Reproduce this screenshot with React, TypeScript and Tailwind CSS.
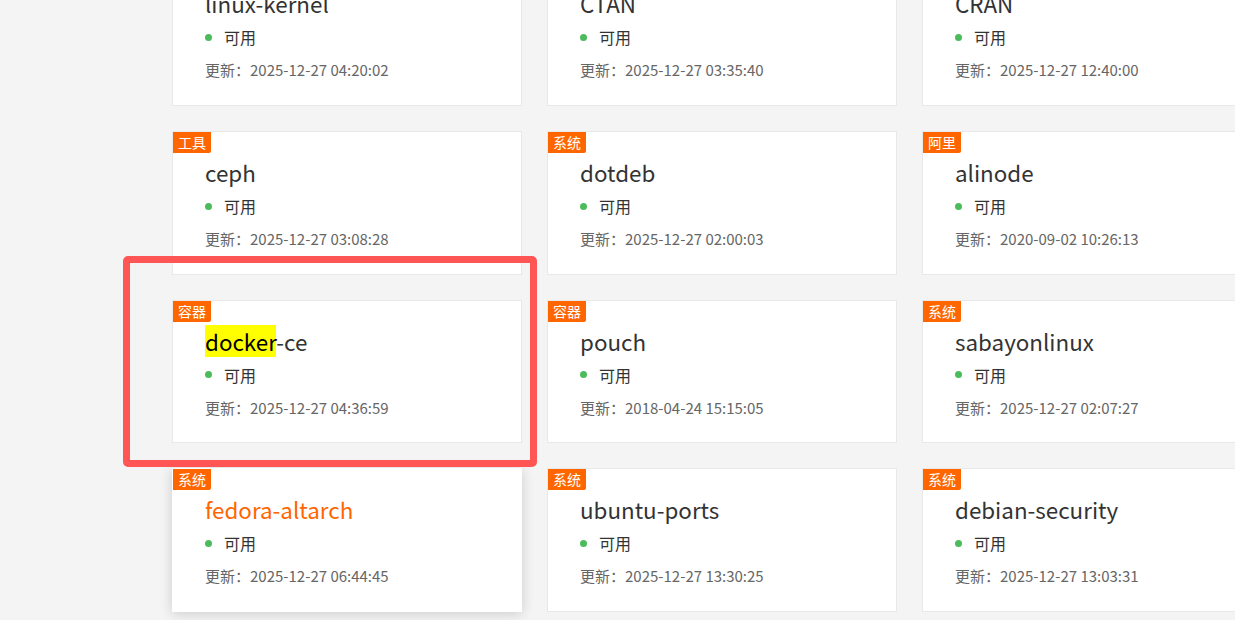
import React from "react";

type Item = {
  tag?: string;
  name: string;
  hl?: string;
  date: string;
  hover?: boolean;
};

const items: Item[] = [
  { tag: "系统", name: "linux-kernel", date: "2025-12-27 04:20:02" },
  { tag: "系统", name: "CTAN", date: "2025-12-27 03:35:40" },
  { tag: "系统", name: "CRAN", date: "2025-12-27 12:40:00" },
  { tag: "工具", name: "ceph", date: "2025-12-27 03:08:28" },
  { tag: "系统", name: "dotdeb", date: "2025-12-27 02:00:03" },
  { tag: "阿里", name: "alinode", date: "2020-09-02 10:26:13" },
  { tag: "容器", name: "-ce", hl: "docker", date: "2025-12-27 04:36:59" },
  { tag: "容器", name: "pouch", date: "2018-04-24 15:15:05" },
  { tag: "系统", name: "sabayonlinux", date: "2025-12-27 02:07:27" },
  { tag: "系统", name: "fedora-altarch", date: "2025-12-27 06:44:45", hover: true },
  { tag: "系统", name: "ubuntu-ports", date: "2025-12-27 13:30:25" },
  { tag: "系统", name: "debian-security", date: "2025-12-27 13:03:31" },
];

function Card({ it }: { it: Item }) {
  return (
    <div
      className={
        "relative h-[143.7px] bg-white pl-[32px] pt-[25px] border " +
        (it.hover
          ? "border-white shadow-[0_2px_12px_rgba(0,0,0,0.16)] z-10"
          : "border-[#e8e8e8]")
      }
    >
      {it.tag && (
        <div className="absolute left-0 top-0 h-[21px] px-[5px] bg-[#ff6600] text-white text-[14px] leading-[21px] rounded-br-[2px]">
          {it.tag}
        </div>
      )}
      <div
        className={
          "text-[22.4px] leading-[30px] whitespace-nowrap " +
          (it.hover ? "text-[#ff6600]" : "text-[#333]")
        }
      >
        {it.hl && <span className="bg-[#ffff00] text-black">{it.hl}</span>}
        {it.name}
      </div>
      <div className="mt-[7px] flex items-center h-[24px] text-[16px] text-[#333]">
        <span className="w-[7px] h-[7px] rounded-full bg-[#4cbb5c] mr-[12px]" />
        <span>可用</span>
      </div>
      <div className="mt-[10px] text-[15px] leading-[21px] text-[#666] whitespace-nowrap">
        更新：{it.date}
      </div>
    </div>
  );
}

export default function App() {
  return (
    <div
      className="relative w-full h-[620px] overflow-hidden bg-[#f4f4f4]"
      style={{ fontFamily: '"Noto Sans CJK SC", "Noto Sans", sans-serif' }}
    >
      <div className="ml-[172px] mt-[-37.7px] grid grid-cols-[350px_350px_350px] gap-x-[25px] gap-y-[25px] w-max">
        {items.map((it, i) => (
          <Card key={i} it={it} />
        ))}
      </div>
      <div className="absolute left-[123px] top-[256px] w-[414px] h-[211px] border-[7px] border-[#ff5555] rounded-[5px] z-20 pointer-events-none" />
    </div>
  );
}
